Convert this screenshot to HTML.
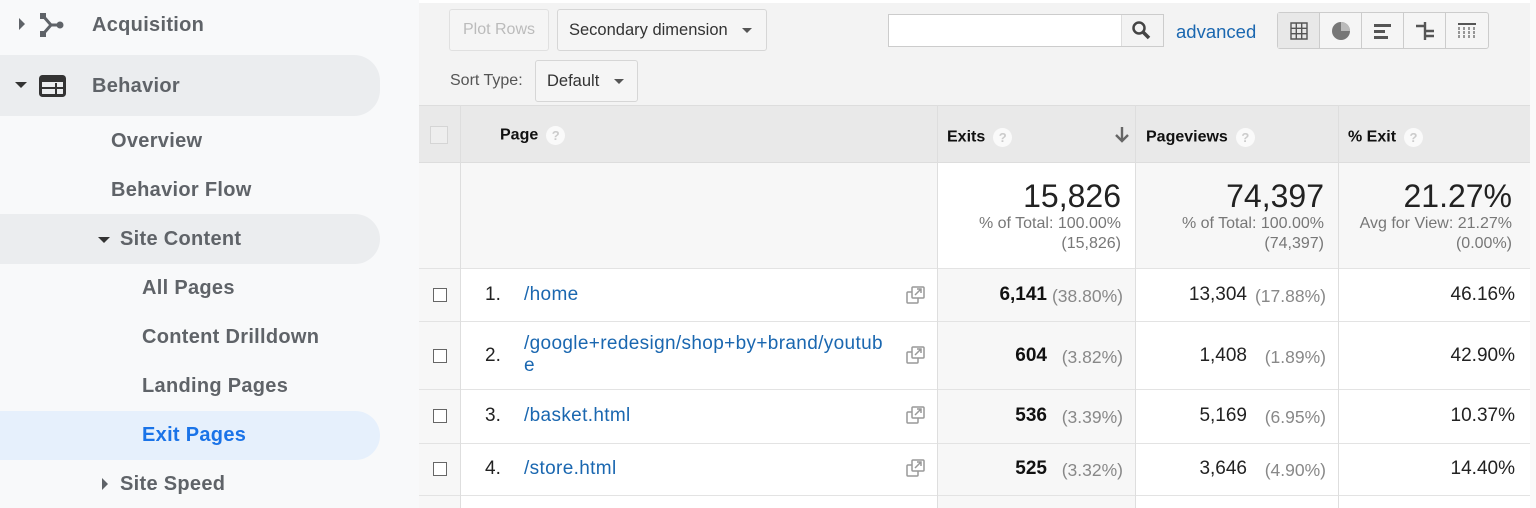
<!DOCTYPE html>
<html><head><meta charset="utf-8"><style>
*{box-sizing:border-box;margin:0;padding:0}
body{width:1536px;height:508px;overflow:hidden;background:#f8f9fa;font-family:"Liberation Sans",Arial,sans-serif;position:relative}
.a{position:absolute}
.nav{font-size:20px;color:#5f6368;font-weight:bold;letter-spacing:0.3px}
.pill{background:#ebedef;border-radius:0 26px 26px 0}
.main{left:419px;top:0;width:1117px;height:508px;background:#f3f3f3}
.btn{border:1px solid #d6d6d6;border-radius:3px;background:#f5f5f5;font-size:16px;color:#333;display:flex;align-items:center}
.tri{width:0;height:0;border-left:5px solid transparent;border-right:5px solid transparent;border-top:5px solid #555;display:inline-block}
.q{display:inline-block;width:19px;height:19px;border-radius:50%;background:#fafafa;color:#ccc;font-size:13px;text-align:center;line-height:19px;font-weight:bold;vertical-align:middle;margin-left:8px}
.hdr{font-size:16px;font-weight:bold;color:#111}
.cb{width:14px;height:14px;border:1px solid #666;background:#fff}
.num{font-size:19px;color:#222;text-align:right}
.g{color:#888}
.lnk{color:#1a67b0;font-size:19px;letter-spacing:0.35px}
.vl{position:absolute;width:1px;background:#dedede}
.hl{position:absolute;height:1px;background:#e3e3e3;left:419px;width:1111px}
.sub{font-size:16px;color:#777;line-height:20px}
</style></head><body>
<!-- sidebar -->
<div class="a" style="left:19px;top:18px;width:0;height:0;border-top:6px solid transparent;border-bottom:6px solid transparent;border-left:6px solid #5f6368"></div>
<svg class="a" style="left:38px;top:12px" width="28" height="26" viewBox="0 0 28 26"><rect x="2" y="1" width="6" height="6" fill="#5f6368"/><rect x="2" y="19" width="6" height="6" fill="#5f6368"/><path d="M6 5 L13 13 L6 21 M13 13 H20" stroke="#5f6368" stroke-width="3" fill="none"/><circle cx="22" cy="13" r="3.5" fill="#5f6368"/></svg>
<div class="a nav" style="left:92px;top:14px">Acquisition</div>
<div class="a pill" style="left:0;top:55px;width:380px;height:61px"></div>
<div class="a" style="left:15px;top:82px;width:0;height:0;border-left:6px solid transparent;border-right:6px solid transparent;border-top:6px solid #333"></div>
<svg class="a" style="left:39px;top:75px" width="27" height="22"><rect x="1.5" y="1.5" width="24" height="19" rx="2" fill="none" stroke="#333" stroke-width="3"/><rect x="1" y="1" width="25" height="6" fill="#333"/><path d="M3 13H24M17 8V20" stroke="#333" stroke-width="2"/></svg>
<div class="a nav" style="left:92px;top:75px">Behavior</div>
<div class="a nav" style="left:111px;top:130px">Overview</div>
<div class="a nav" style="left:111px;top:179px">Behavior Flow</div>
<div class="a pill" style="left:0;top:214px;width:380px;height:50px"></div>
<div class="a" style="left:98px;top:237px;width:0;height:0;border-left:6px solid transparent;border-right:6px solid transparent;border-top:6px solid #333"></div>
<div class="a nav" style="left:120px;top:228px">Site Content</div>
<div class="a nav" style="left:142px;top:277px">All Pages</div>
<div class="a nav" style="left:142px;top:326px">Content Drilldown</div>
<div class="a nav" style="left:142px;top:375px">Landing Pages</div>
<div class="a" style="left:0;top:411px;width:380px;height:49px;background:#e6f0fc;border-radius:0 25px 25px 0"></div>
<div class="a nav" style="left:142px;top:424px;color:#1a73e8">Exit Pages</div>
<div class="a" style="left:102px;top:478px;width:0;height:0;border-top:6px solid transparent;border-bottom:6px solid transparent;border-left:6px solid #5f6368"></div>
<div class="a nav" style="left:120px;top:473px">Site Speed</div>

<!-- main -->
<div class="a main"></div>
<div class="a" style="left:1530px;top:0;width:6px;height:508px;background:#fafafa"></div>
<div class="a" style="left:419px;top:0;width:1111px;height:3px;background:#fff"></div>
<div class="a btn" style="left:449px;top:9px;width:100px;height:42px;color:#bbb;justify-content:center;border-color:#e0e0e0">Plot Rows</div>
<div class="a btn" style="left:557px;top:9px;width:210px;height:42px;padding-left:11px;font-size:16.5px">Secondary dimension<span class="tri" style="margin-left:14px"></span></div>
<div class="a" style="left:450px;top:72px;font-size:16px;color:#555">Sort Type:</div>
<div class="a btn" style="left:535px;top:60px;width:103px;height:42px;padding-left:11px;font-size:16.5px">Default<span class="tri" style="margin-left:15px"></span></div>
<div class="a" style="left:888px;top:14px;width:276px;height:33px;border:1px solid #ccc;background:#fff"></div>
<div class="a" style="left:1121px;top:15px;width:42px;height:31px;background:#f3f3f3;border-left:1px solid #ddd"></div>
<svg class="a" style="left:1131px;top:20px" width="22" height="22"><circle cx="8" cy="8" r="5.5" fill="none" stroke="#444" stroke-width="2.5"/><path d="M12 12L18 18" stroke="#444" stroke-width="3.5"/></svg>
<div class="a" style="left:1176px;top:21px;font-size:18.5px;color:#1a67b0">advanced</div>
<div class="a" style="left:1277px;top:12px;width:212px;height:37px;border:1px solid #ccc;border-radius:3px;background:#f5f5f5;display:flex">
 <div style="width:42px;background:#e8e8e8;border-right:1px solid #ccc;display:flex;align-items:center;justify-content:center"><svg width="18" height="18"><path d="M1 1H17V17H1ZM1 6.3H17M1 11.7H17M6.3 1V17M11.7 1V17" stroke="#555" stroke-width="1.4" fill="none"/></svg></div>
 <div style="width:42px;border-right:1px solid #ccc;display:flex;align-items:center;justify-content:center"><svg width="20" height="20"><circle cx="10" cy="10" r="9" fill="#777"/><path d="M10 10V1A9 9 0 0 1 19 10Z" fill="#bbb"/></svg></div>
 <div style="width:42px;border-right:1px solid #ccc;display:flex;align-items:center;justify-content:center"><svg width="20" height="18"><rect x="1" y="2" width="17" height="3" fill="#555"/><rect x="1" y="8" width="11" height="3" fill="#555"/><rect x="1" y="14" width="14" height="3" fill="#555"/></svg></div>
 <div style="width:42px;border-right:1px solid #ccc;display:flex;align-items:center;justify-content:center"><svg width="20" height="20"><path d="M1 5H10M10 1V19M10 10H19M10 15H19" stroke="#555" stroke-width="2.4" fill="none"/></svg></div>
 <div style="flex:1;display:flex;align-items:center;justify-content:center"><svg width="20" height="18"><path d="M1 2H19" stroke="#555" stroke-width="2"/><path d="M2 5V17M7 5V17M12 5V17M17 5V17" stroke="#777" stroke-width="1.5" stroke-dasharray="3 1"/></svg></div>
</div>

<!-- table header -->
<div class="a" style="left:419px;top:105px;width:1111px;height:58px;background:#e9e9e9;border-top:1px solid #ddd;border-bottom:1px solid #ddd"></div>
<div class="a cb" style="left:430px;top:126px;border-color:#d5d5d5;background:#eee;width:18px;height:18px"></div>
<div class="a hdr" style="left:500px;top:126px">Page<span class="q">?</span></div>
<div class="a hdr" style="left:947px;top:128px">Exits<span class="q">?</span></div>
<svg class="a" style="left:1114px;top:126px" width="16" height="18"><path d="M8 1V15M2 9L8 15L14 9" stroke="#666" stroke-width="2.4" fill="none"/></svg>
<div class="a hdr" style="left:1146px;top:128px">Pageviews<span class="q">?</span></div>
<div class="a hdr" style="left:1348px;top:128px">% Exit<span class="q">?</span></div>

<!-- summary row -->
<div class="a" style="left:419px;top:163px;width:518px;height:105px;background:#f7f7f7"></div>
<div class="a" style="left:937px;top:163px;width:198px;height:105px;background:#fff"></div>
<div class="a" style="left:1135px;top:163px;width:395px;height:105px;background:#f7f7f7"></div>
<div class="a num" style="left:930px;top:178px;width:191px"><div style="font-size:32px;line-height:36px">15,826</div><div class="sub">% of Total: 100.00%<br>(15,826)</div></div>
<div class="a num" style="left:1130px;top:178px;width:194px"><div style="font-size:32px;line-height:36px">74,397</div><div class="sub">% of Total: 100.00%<br>(74,397)</div></div>
<div class="a num" style="left:1330px;top:178px;width:182px"><div style="font-size:32px;line-height:36px">21.27%</div><div class="sub">Avg for View: 21.27%<br>(0.00%)</div></div>

<!-- data rows -->
<div class="a" style="left:419px;top:268px;width:41px;height:240px;background:#f7f7f7"></div>
<div class="a" style="left:460px;top:268px;width:477px;height:240px;background:#fff"></div>
<div class="a" style="left:937px;top:268px;width:198px;height:240px;background:#f7f7f7"></div>
<div class="a" style="left:1135px;top:268px;width:395px;height:240px;background:#fff"></div>

<div class="hl" style="top:268px"></div><div class="hl" style="top:321px"></div><div class="hl" style="top:389px"></div><div class="hl" style="top:443px"></div><div class="hl" style="top:495px"></div>
<div class="vl" style="left:460px;top:105px;height:403px"></div>
<div class="vl" style="left:937px;top:105px;height:403px"></div>
<div class="vl" style="left:1135px;top:105px;height:403px"></div>
<div class="vl" style="left:1338px;top:105px;height:403px"></div>

<div class="a cb" style="left:433px;top:288px"></div>
<div class="a cb" style="left:433px;top:349px"></div>
<div class="a cb" style="left:433px;top:409px"></div>
<div class="a cb" style="left:433px;top:462px"></div>

<div class="a num" style="left:485px;top:284px;text-align:left">1.</div>
<div class="a num" style="left:485px;top:345px;text-align:left">2.</div>
<div class="a num" style="left:485px;top:405px;text-align:left">3.</div>
<div class="a num" style="left:485px;top:458px;text-align:left">4.</div>
<div class="a lnk" style="left:524px;top:284px">/home</div>
<div class="a lnk" style="left:524px;top:333px;line-height:22px">/google+redesign/shop+by+brand/youtub<br>e</div>
<div class="a lnk" style="left:524px;top:405px">/basket.html</div>
<div class="a lnk" style="left:524px;top:458px">/store.html</div>

<svg class="a" style="left:906px;top:286px" width="19" height="19"><rect x="1" y="6" width="11" height="11" rx="1" fill="#fff" stroke="#999" stroke-width="1.5"/><rect x="6" y="1" width="12" height="11" rx="1" fill="#fff" stroke="#999" stroke-width="1.5"/><path d="M9 9L15 3M11 3H15V7" stroke="#999" stroke-width="1.5" fill="none"/></svg>
<svg class="a" style="left:906px;top:346px" width="19" height="19"><rect x="1" y="6" width="11" height="11" rx="1" fill="#fff" stroke="#999" stroke-width="1.5"/><rect x="6" y="1" width="12" height="11" rx="1" fill="#fff" stroke="#999" stroke-width="1.5"/><path d="M9 9L15 3M11 3H15V7" stroke="#999" stroke-width="1.5" fill="none"/></svg>
<svg class="a" style="left:906px;top:406px" width="19" height="19"><rect x="1" y="6" width="11" height="11" rx="1" fill="#fff" stroke="#999" stroke-width="1.5"/><rect x="6" y="1" width="12" height="11" rx="1" fill="#fff" stroke="#999" stroke-width="1.5"/><path d="M9 9L15 3M11 3H15V7" stroke="#999" stroke-width="1.5" fill="none"/></svg>
<svg class="a" style="left:906px;top:459px" width="19" height="19"><rect x="1" y="6" width="11" height="11" rx="1" fill="#fff" stroke="#999" stroke-width="1.5"/><rect x="6" y="1" width="12" height="11" rx="1" fill="#fff" stroke="#999" stroke-width="1.5"/><path d="M9 9L15 3M11 3H15V7" stroke="#999" stroke-width="1.5" fill="none"/></svg>

<div class="a num" style="left:937px;top:284px;width:110px;font-weight:bold;color:#111">6,141</div><div class="a num g" style="left:1047px;top:286px;width:76px;font-size:17.5px">(38.80%)</div>
<div class="a num" style="left:937px;top:345px;width:110px;font-weight:bold;color:#111">604</div><div class="a num g" style="left:1047px;top:347px;width:76px;font-size:17.5px">(3.82%)</div>
<div class="a num" style="left:937px;top:405px;width:110px;font-weight:bold;color:#111">536</div><div class="a num g" style="left:1047px;top:407px;width:76px;font-size:17.5px">(3.39%)</div>
<div class="a num" style="left:937px;top:458px;width:110px;font-weight:bold;color:#111">525</div><div class="a num g" style="left:1047px;top:460px;width:76px;font-size:17.5px">(3.32%)</div>

<div class="a num" style="left:1135px;top:284px;width:112px">13,304</div><div class="a num g" style="left:1247px;top:286px;width:79px;font-size:17.5px">(17.88%)</div>
<div class="a num" style="left:1135px;top:345px;width:112px">1,408</div><div class="a num g" style="left:1247px;top:347px;width:79px;font-size:17.5px">(1.89%)</div>
<div class="a num" style="left:1135px;top:405px;width:112px">5,169</div><div class="a num g" style="left:1247px;top:407px;width:79px;font-size:17.5px">(6.95%)</div>
<div class="a num" style="left:1135px;top:458px;width:112px">3,646</div><div class="a num g" style="left:1247px;top:460px;width:79px;font-size:17.5px">(4.90%)</div>

<div class="a num" style="left:1338px;top:284px;width:177px">46.16%</div>
<div class="a num" style="left:1338px;top:345px;width:177px">42.90%</div>
<div class="a num" style="left:1338px;top:405px;width:177px">10.37%</div>
<div class="a num" style="left:1338px;top:458px;width:177px">14.40%</div>
</body></html>
